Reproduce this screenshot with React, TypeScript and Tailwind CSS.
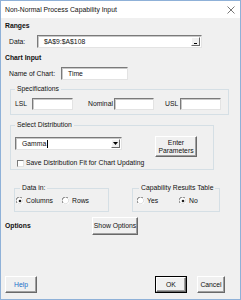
import React from "react";

function Sunken({ className = "", children }: { className?: string; children?: React.ReactNode }) {
  return (
    <div
      className={
        "bg-white border border-t-[#7a7a7a] border-l-[#7a7a7a] border-r-[#e3e3e3] border-b-[#e3e3e3] shadow-[inset_1px_1px_0_#c8c8c8] flex items-center " +
        className
      }
    >
      {children}
    </div>
  );
}

function Btn({ className = "", children, def = false }: { className?: string; children?: React.ReactNode; def?: boolean }) {
  return (
    <div className={(def ? "border border-black " : "") + "flex " + className}>
      <div className="flex-1 flex items-center justify-center bg-[#f0f0f0] border border-t-white border-l-white border-r-[#696969] border-b-[#696969] shadow-[inset_-1px_-1px_0_#a0a0a0] leading-[8px] text-center">
        {children}
      </div>
    </div>
  );
}

function Radio({ on = false }: { on?: boolean }) {
  return (
    <svg width="8" height="8" viewBox="0 0 8 8" className="shrink-0">
      <circle cx="4" cy="4" r="3.5" fill="#ffffff" />
      <path d="M1 6 A3.5 3.5 0 0 1 6 1" stroke="#7a7a7a" strokeWidth="1" fill="none" />
      <path d="M6.5 2 A3.5 3.5 0 0 1 2 6.6" stroke="#e0e0e0" strokeWidth="1" fill="none" />
      {on && <circle cx="4" cy="4" r="1.3" fill="#222" />}
    </svg>
  );
}

export default function App() {
  return (
    <div className="w-[241px] h-[300px] bg-[#f0f0f0] border border-[#8fb1d8] flex flex-col font-['Liberation_Sans',Arial,sans-serif] text-[6.8px] text-[#111] leading-[10px] overflow-hidden">
      <div className="h-[17px] bg-white flex items-center justify-between pl-[4px] pr-[5px] shrink-0">
        <span>Non-Normal Process Capability Input</span>
        <svg width="8" height="8" viewBox="0 0 8 8">
          <path d="M0.5 0.5 L7.5 7.5 M7.5 0.5 L0.5 7.5" stroke="#555" strokeWidth="0.8" />
        </svg>
      </div>
      <div className="pl-[4px] flex flex-col">
        <div className="mt-[3px] h-[10px] font-bold">Ranges</div>
        <div className="mt-[4px] h-[13px] flex items-center">
          <span className="ml-[4px] w-[28px]">Data:</span>
          <Sunken className="w-[165px] h-[13px] justify-between">
            <span className="ml-[6px]">$A$9:$A$108</span>
            <div className="mr-[1px] w-[9px] h-[9px] bg-[#f0f0f0] border border-t-white border-l-white border-r-[#696969] border-b-[#696969] flex items-end justify-center pb-[1px]">
              <div className="w-[3px] h-[1px] bg-black" />
            </div>
          </Sunken>
        </div>
        <div className="mt-[5px] h-[10px] font-bold">Chart Input</div>
        <div className="mt-[4px] h-[13px] flex items-center">
          <span className="ml-[4px] w-[52px]">Name of Chart:</span>
          <Sunken className="w-[67px] h-[13px]">
            <span className="ml-[6px]">Time</span>
          </Sunken>
        </div>
        <fieldset className="mt-[5px] ml-[5px] w-[219px] border border-[#d5dfe5] pb-[4px]">
          <legend className="ml-[4px] px-[2px] leading-[8px]">Specifications</legend>
          <div className="mt-[5px] flex items-center h-[12px]">
            <span className="ml-[4px] w-[17px]">LSL</span>
            <Sunken className="w-[41px] h-[12px]" />
            <span className="ml-[15px] w-[26px]">Nominal</span>
            <Sunken className="w-[40px] h-[12px]" />
            <span className="ml-[11px] w-[15px]">USL</span>
            <Sunken className="w-[41px] h-[12px]" />
          </div>
        </fieldset>
        <fieldset className="mt-[6px] ml-[5px] w-[204px] border border-[#d5dfe5] pb-[1px]">
          <legend className="ml-[4px] px-[2px] leading-[8px]">Select Distribution</legend>
          <div className="mt-[7px] flex items-start h-[21px]">
            <Sunken className="ml-[4px] mt-[1px] w-[107px] h-[13px] justify-between">
              <span className="ml-[6px] flex items-center">
                Gamma<span className="inline-block w-[1px] h-[8px] bg-black ml-[1px]" />
              </span>
              <div className="mr-[1px] w-[9px] h-[9px] bg-[#f0f0f0] border border-t-white border-l-white border-r-[#696969] border-b-[#696969] flex items-center justify-center">
                <svg width="5" height="3" viewBox="0 0 5 3">
                  <path d="M0 0 L5 0 L2.5 3 Z" fill="#000" />
                </svg>
              </div>
            </Sunken>
            <Btn className="ml-[33px] w-[42px] h-[21px]">
              <span>
                Enter
                <br />
                Parameters
              </span>
            </Btn>
          </div>
          <div className="mt-[1px] h-[10px] flex items-center">
            <div className="ml-[6px] w-[7px] h-[7px] bg-white border border-t-[#7a7a7a] border-l-[#7a7a7a] border-r-[#e3e3e3] border-b-[#e3e3e3]" />
            <span className="ml-[2px]">Save Distribution Fit for Chart Updating</span>
          </div>
        </fieldset>
        <div className="mt-[14px] flex items-start">
          <fieldset className="ml-[9px] w-[95px] border border-[#d5dfe5] pb-[5px]">
            <legend className="ml-[5px] px-[2px] leading-[8px]">Data in:</legend>
            <div className="mt-[4px] h-[10px] flex items-center">
              <span className="ml-[1px]">
                <Radio on />
              </span>
              <span className="ml-[2px] w-[36px]">Columns</span>
              <Radio />
              <span className="ml-[2px]">Rows</span>
            </div>
          </fieldset>
          <fieldset className="ml-[23px] w-[88px] border border-[#d5dfe5] pb-[5px]">
            <legend className="ml-[6px] px-[2px] leading-[8px]">Capability Results Table</legend>
            <div className="mt-[4px] h-[10px] flex items-center">
              <span className="ml-[4px]">
                <Radio />
              </span>
              <span className="ml-[2px] w-[32px]">Yes</span>
              <Radio on />
              <span className="ml-[2px]">No</span>
            </div>
          </fieldset>
        </div>
        <div className="mt-[5px] h-[18px] flex items-center">
          <span className="font-bold w-[87px]">Options</span>
          <Btn className="w-[46px] h-[18px]">Show Options</Btn>
        </div>
        <div className="mt-[41px] h-[17px] flex items-center">
          <Btn className="w-[32px] h-[17px]">
            <span className="text-[#1a6fc8]">Help</span>
          </Btn>
          <Btn def className="ml-[118px] w-[32px] h-[17px]">
            OK
          </Btn>
          <Btn className="ml-[10px] w-[28px] h-[17px]">Cancel</Btn>
        </div>
      </div>
    </div>
  );
}
